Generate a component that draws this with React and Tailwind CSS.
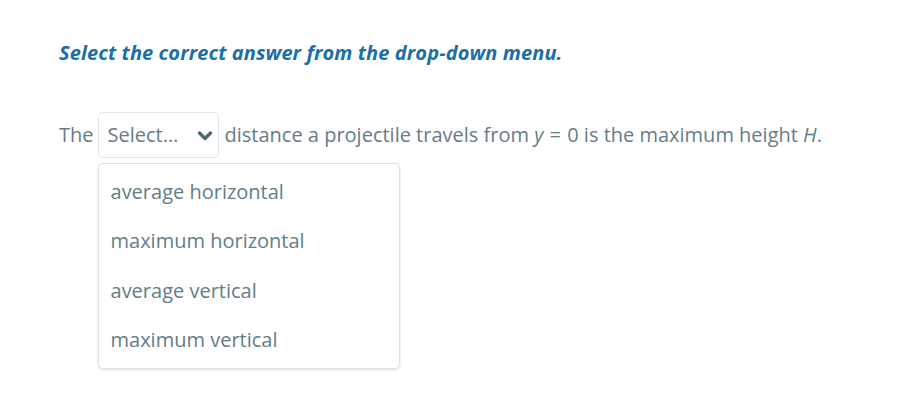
import React from 'react';

const options = ['average horizontal', 'maximum horizontal', 'average vertical', 'maximum vertical'];

const App = () => {
    return (
        <div className="w-[909px] h-[400px] bg-white pl-[59px] pt-[39px] font-['Open_Sans',sans-serif] text-[#657d86]">
            {/* Prompt */}
            <p className="text-[20px] font-bold italic text-[#1b6fa8] leading-[28px] tracking-[0.1px]">
                Select the correct answer from the drop-down menu.
            </p>

            {/* Sentence with dropdown */}
            <div className="mt-[45px] flex items-center text-[20px] leading-[26px]">
                <span>The</span>
                <div className="relative ml-[4px] mr-[6px]">
                    <div className="w-[121px] h-[46px] border border-[#e3e6e7] rounded-[5px] flex items-center justify-between pl-[9px] pr-[5px]">
                        <span>Select…</span>
                        <svg width="16" height="12" viewBox="0 0 16 12" className="mt-[2px]">
                            <polyline points="2.5,3 8,8.5 13.5,3" fill="none" stroke="#4d6670" strokeWidth="3.4" strokeLinecap="round" strokeLinejoin="round" />
                        </svg>
                    </div>
                    {/* Open menu */}
                    <div className="absolute left-0 top-[51px] w-[302px] bg-white border border-[#dfe2e3] rounded-[5px] shadow-[0_1px_3px_rgba(0,0,0,0.12)] py-[3px] z-10">
                        {options.map(opt => (
                            <div key={opt} className="h-[49.5px] flex items-center px-[12px] whitespace-nowrap">
                                {opt}
                            </div>
                        ))}
                    </div>
                </div>
                <span className="whitespace-nowrap">
                    distance a projectile travels from <i>y</i> <span className="mx-[1px]">=</span> 0 is the maximum height <i>H</i>.
                </span>
            </div>
        </div>
    );
};

export default App;
